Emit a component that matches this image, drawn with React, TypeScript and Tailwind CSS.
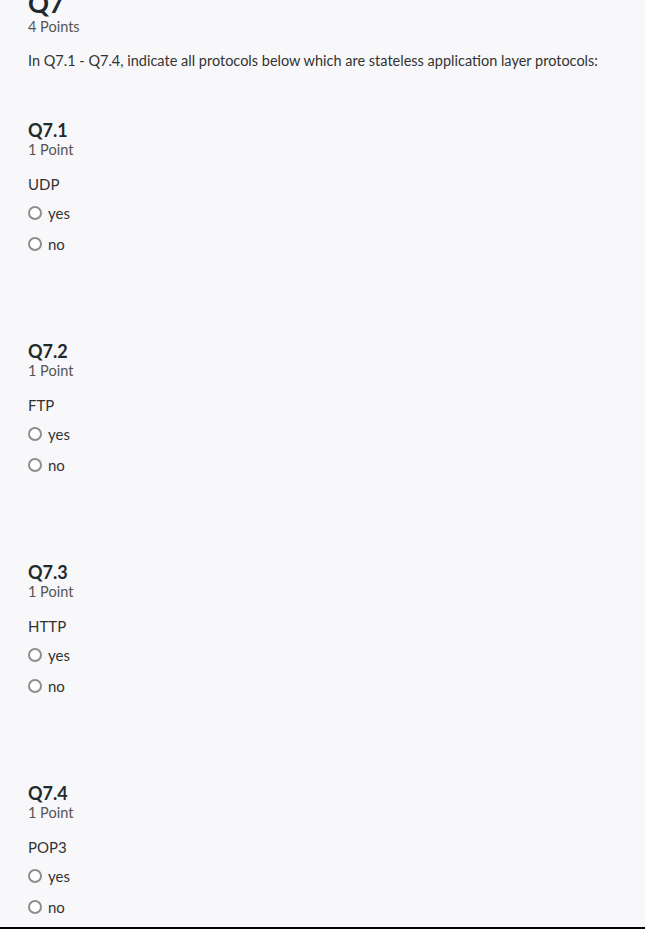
import React from "react";

const font = { fontFamily: "Lato, 'Open Sans', Arial, sans-serif" };

function Radio({ label }: { label: string }) {
  return (
    <label className="flex items-center gap-[6px] h-[20px]">
      <span className="w-[14px] h-[14px] rounded-full border-2 border-[#8d8d8d] bg-white box-border" />
      <span className="text-[15px] text-[#333]">{label}</span>
    </label>
  );
}

function Sub({ num, proto }: { num: string; proto: string }) {
  return (
    <div className="h-[221px] flex flex-col">
      <div className="text-[18px] font-bold text-[#1e2a2e] leading-[22px]">{num}</div>
      <div className="text-[14.5px] text-[#555] leading-[18px]">1 Point</div>
      <div className="text-[15px] text-[#333] leading-[20px] mt-[15px]">{proto}</div>
      <div className="flex flex-col gap-[11px] mt-[9px]">
        <Radio label="yes" />
        <Radio label="no" />
      </div>
    </div>
  );
}

export default function App() {
  return (
    <div style={font} className="w-[645px] h-[929px] bg-[#f8f8fa] overflow-hidden flex flex-col border-b-2 border-black box-border">
      <div className="px-[28px] -mt-[12px] flex flex-col">
        <div className="text-[26px] font-bold text-[#1e2a2e] leading-[30px]">Q7</div>
        <div className="text-[14.5px] text-[#555] leading-[18px]">4 Points</div>
        <div className="text-[14.5px] text-[#333] leading-[20px] mt-[15px] whitespace-nowrap">
          In Q7.1 - Q7.4, indicate all protocols below which are stateless application layer protocols:
        </div>
        <div className="mt-[48px] flex flex-col">
          <Sub num="Q7.1" proto="UDP" />
          <Sub num="Q7.2" proto="FTP" />
          <Sub num="Q7.3" proto="HTTP" />
          <Sub num="Q7.4" proto="POP3" />
        </div>
      </div>
    </div>
  );
}
